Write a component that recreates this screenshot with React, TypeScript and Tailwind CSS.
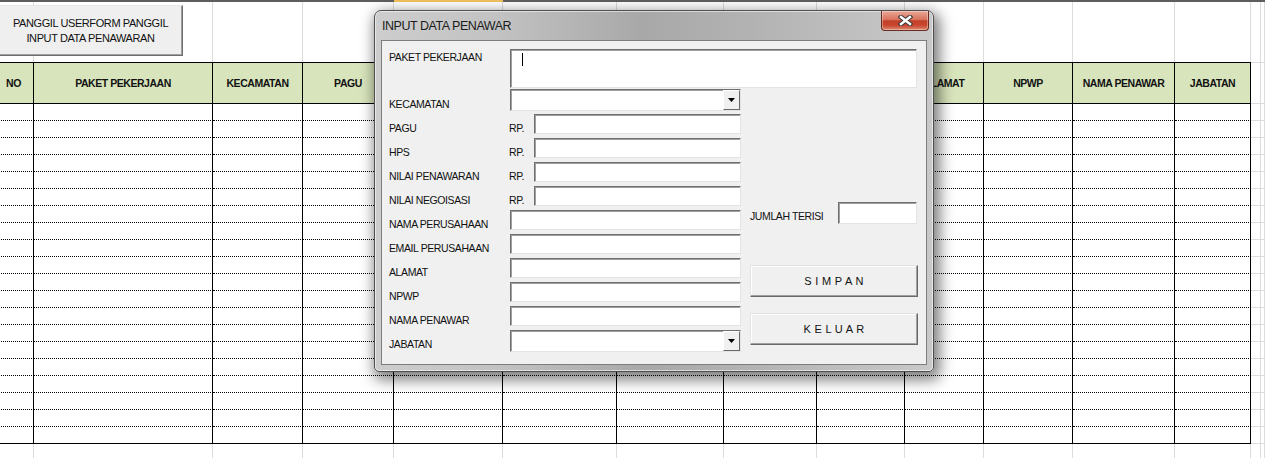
import React from 'react';

// Spreadsheet grid: column widths copied from the sheet, last two are the empty cells past the table
const GRID =
  'grid grid-cols-[40px_179px_90px_91px_109px_114px_107px_93px_88px_79px_89px_102px_76px_10px_minmax(0,1fr)]';

const HEADERS = [
  'NO',
  'PAKET PEKERJAAN',
  'KECAMATAN',
  'PAGU',
  'HPS',
  'NILAI PENAWARAN',
  'NILAI NEGOISASI',
  'NAMA PERUSAHAAN',
  'EMAIL PERUSAHAAN',
  'ALAMAT',
  'NPWP',
  'NAMA PENAWAR',
  'JABATAN',
];

const TRAIL = ['t1', 't2'];
const ROWS = Array.from({ length: 20 }, (_, i) => i);

const SANS = "font-['Liberation_Sans',Arial,sans-serif]";
const LABEL = `${SANS} text-[10.5px] leading-[14px] tracking-[-0.4px] text-[#111] whitespace-nowrap`;

const RP_FIELDS = ['PAGU', 'HPS', 'NILAI PENAWARAN', 'NILAI NEGOISASI'];
const TEXT_FIELDS = ['NAMA PERUSAHAAN', 'EMAIL PERUSAHAAN', 'ALAMAT', 'NPWP', 'NAMA PENAWAR'];

function Sheet() {
  return (
    <div className="ml-[-6px]">
      {/* tall first row (holds the floating button) */}
      <div className={GRID}>
        {HEADERS.map((h) => (
          <div key={h} className="h-[60px] border-r border-[#dadcdd]" />
        ))}
        {TRAIL.map((t) => (
          <div key={t} className="h-[60px] border-r border-[#dadcdd]" />
        ))}
      </div>

      {/* header row */}
      <div className={GRID}>
        {HEADERS.map((h) => (
          <div
            key={h}
            className={`h-[42px] px-[2px] flex items-center justify-center text-center overflow-hidden border-y border-r border-black bg-[#d8e4bc] ${SANS} text-[10.5px] leading-[13px] tracking-[-0.45px] font-bold text-[#111]`}
          >
            {h}
          </div>
        ))}
        {TRAIL.map((t) => (
          <div key={t} className="h-[42px] border-y border-r border-[#dadcdd]" />
        ))}
      </div>

      {/* empty data rows */}
      {ROWS.map((r) => {
        const last = r === ROWS.length - 1;
        return (
          <div key={r} className={GRID}>
            {HEADERS.map((h) => (
              <div
                key={h}
                className={
                  last
                    ? 'h-[17px] border-r border-b border-black'
                    : 'h-[17px] border-r border-b border-black [border-bottom-style:dotted]'
                }
              />
            ))}
            {TRAIL.map((t) => (
              <div key={t} className="h-[17px] border-r border-b border-[#dadcdd]" />
            ))}
          </div>
        );
      })}

      <div className={GRID}>
        {HEADERS.map((h) => (
          <div key={h} className="h-[20px] border-r border-[#dadcdd]" />
        ))}
        {TRAIL.map((t) => (
          <div key={t} className="h-[20px] border-r border-[#dadcdd]" />
        ))}
      </div>
    </div>
  );
}

function Box({ className = '', children }: { className?: string; children?: React.ReactNode }) {
  return (
    <div
      className={`bg-white border border-t-[#6f6f6f] border-l-[#6f6f6f] border-r-[#e3e3e3] border-b-[#e3e3e3] shadow-[inset_1px_1px_0_#a0a0a0] ${className}`}
    >
      {children}
    </div>
  );
}

function Combo({ className = '' }: { className?: string }) {
  return (
    <Box className={`flex justify-end h-[22px] ${className}`}>
      <div className="w-[17px] h-full flex items-center justify-center bg-[#f0f0f0] border border-t-white border-l-white border-r-[#696969] border-b-[#696969]">
        <svg width="7" height="4" viewBox="0 0 7 4">
          <polygon points="0,0 7,0 3.5,4" fill="#000" />
        </svg>
      </div>
    </Box>
  );
}

function FormButton({ label, className = '' }: { label: string; className?: string }) {
  return (
    <div
      className={`h-[32px] w-[168px] flex items-center justify-center bg-[#f0f0f0] border border-t-[#e3e3e3] border-l-[#e3e3e3] border-r-[#696969] border-b-[#696969] shadow-[inset_-1px_-1px_0_#a0a0a0,inset_1px_1px_0_#fff] ${SANS} text-[11px] tracking-[0.3px] text-[#111] ${className}`}
    >
      {label}
    </div>
  );
}

function CloseButton() {
  return (
    <div className="mr-[4px] w-[48px] h-[20px] flex items-center justify-center rounded-b-[4px] border border-t-0 border-[#6b2a20] bg-[linear-gradient(180deg,#e9a896_0%,#d9735d_45%,#c23f28_52%,#c9462f_75%,#db8a70_100%)] shadow-[inset_0_0_0_1px_rgba(255,255,255,0.35)]">
      <svg width="15" height="11" viewBox="0 0 15 11">
        <path d="M3 2 L12 9 M12 2 L3 9" stroke="#3b3b3b" strokeWidth="4.6" strokeLinecap="square" />
        <path d="M3 2 L12 9 M12 2 L3 9" stroke="#fff" strokeWidth="2.4" strokeLinecap="square" />
      </svg>
    </div>
  );
}

function UserForm() {
  return (
    <div className="absolute left-[374px] top-[10px] w-[560px] h-[362px] flex flex-col rounded-t-[7px] rounded-b-[5px] border border-[#4f4f4f] bg-[linear-gradient(90deg,#cdcdcd_0%,#c2c2c2_22%,#a8a8a8_48%,#b3b3b3_68%,#c9c9c9_100%)] shadow-[3px_5px_14px_3px_rgba(0,0,0,0.5),inset_0_0_0_1px_rgba(255,255,255,0.55)]">
      {/* title bar */}
      <div className="h-[29px] flex items-start justify-between">
        <div className={`pl-[7px] pt-[7px] ${SANS} text-[12.5px] leading-[16px] tracking-[-0.45px] text-[#1b1b1b]`}>
          INPUT DATA PENAWAR
        </div>
        <CloseButton />
      </div>

      {/* client area */}
      <div className="flex-1 mx-[6px] mb-[6px] border border-[#7d7d7d] bg-[#f0f0f0] pl-[7px] pt-[8px]">
        <div className="flex">
          <div className={`w-[121px] pt-[1px] ${LABEL}`}>PAKET PEKERJAAN</div>
          <Box className="w-[407px] h-[39px] pl-[11px] pt-[3px]">
            <div className="w-px h-[13px] bg-black" />
          </Box>
        </div>

        <div className="flex mt-[1px]">
          <div className={`w-[121px] pt-[8px] ${LABEL}`}>KECAMATAN</div>
          <Combo className="w-[231px]" />
        </div>

        <div className="flex mt-[3px]">
          {/* left column of fields */}
          <div className="w-[352px]">
            {RP_FIELDS.map((f) => (
              <div key={f} className="flex h-[24px]">
                <div className={`w-[120px] pt-[7px] ${LABEL}`}>{f}</div>
                <div className={`w-[25px] pt-[7px] ${LABEL}`}>RP.</div>
                <Box className="w-[207px] h-[20px]" />
              </div>
            ))}
            {TEXT_FIELDS.map((f) => (
              <div key={f} className="flex h-[24px]">
                <div className={`w-[121px] pt-[7px] ${LABEL}`}>{f}</div>
                <Box className="w-[231px] h-[20px]" />
              </div>
            ))}
            <div className="flex h-[24px]">
              <div className={`w-[121px] pt-[7px] ${LABEL}`}>JABATAN</div>
              <Combo className="w-[231px]" />
            </div>
          </div>

          {/* right column */}
          <div className="ml-[9px] pt-[88px]">
            <div className="flex h-[22px]">
              <div className={`w-[88px] pt-[7px] ${LABEL}`}>JUMLAH TERISI</div>
              <Box className="w-[79px] h-[22px]" />
            </div>
            <FormButton label="S I M P A N" className="mt-[41px]" />
            <FormButton label="K E L U A R" className="mt-[16px]" />
          </div>
        </div>
      </div>
    </div>
  );
}

export default function App() {
  return (
    <div className="relative w-[1265px] h-[458px] overflow-hidden bg-white">
      {/* bottom edge of the column-letter bar, column E selected */}
      <div className="flex h-[2px]">
        <div className="w-[394px] bg-[#5e5e5e]" />
        <div className="w-[109px] bg-[#f2c15e]" />
        <div className="flex-1 bg-[#5e5e5e]" />
      </div>

      <Sheet />

      {/* form-control button placed on the sheet */}
      <div
        className={`absolute left-[-2px] top-[5px] w-[185px] h-[51px] flex flex-col items-center justify-center whitespace-nowrap bg-[#efefef] border border-t-[#e6e6e6] border-l-[#e6e6e6] border-r-[#6d6d6d] border-b-[#6d6d6d] shadow-[inset_-1px_-1px_0_#a0a0a0] ${SANS} text-[11px] leading-[15px] tracking-[-0.4px] text-[#111]`}
      >
        <span>PANGGIL USERFORM PANGGIL</span>
        <span>INPUT DATA PENAWARAN</span>
      </div>

      <UserForm />
    </div>
  );
}
